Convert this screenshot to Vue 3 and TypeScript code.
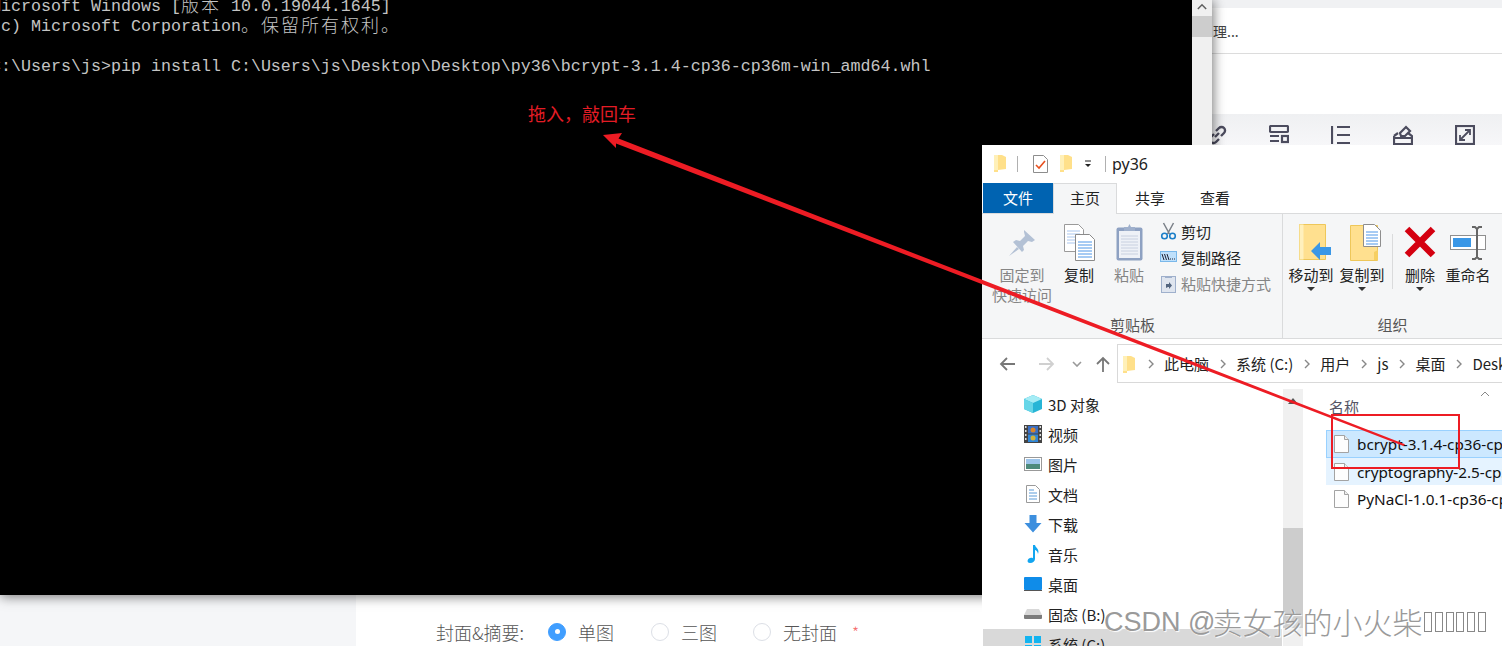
<script setup lang="ts">
const crumbs = ['此电脑', '系统 (C:)', '用户', 'js', '桌面', 'Desktop']
const files = [
  { name: 'bcrypt-3.1.4-cp36-cp36m-win_amd64.whl', cls: 'sel' },
  { name: 'cryptography-2.5-cp36-cp36m-win_amd64.whl', cls: 'sel2' },
  { name: 'PyNaCl-1.0.1-cp36-cp36m-win_amd64.whl', cls: '' },
]
const tofu = [1, 2, 3, 4, 5, 6]
</script>

<template>
  <div class="stage">
    <!-- page behind -->
    <div class="page">
      <div class="strip"></div>
      <div class="hrow"><span>理...</span></div>
      <div class="hblank"></div>
      <div class="tools">
        <svg class="ti" viewBox="0 0 20 20" fill="none" stroke="#4c4c5e" stroke-width="2.4"><path d="M12 8 8 12M7 9 4 12a3.5 3.5 0 0 0 5 5l3-3M9 6l3-3a3.5 3.5 0 0 1 5 5l-3 3"/></svg>
        <svg class="ti" viewBox="0 0 20 20" fill="none" stroke="#4c4c5e" stroke-width="2.2"><rect x="1" y="1" width="18" height="6" rx="1"/><path d="M1 11h9M1 16h9"/><rect x="13" y="11" width="6" height="6"/></svg>
        <svg class="ti" viewBox="0 0 20 20" fill="none" stroke="#4c4c5e" stroke-width="2.2"><path d="M1 1v18M6 2h13M6 10h13M6 18h13"/></svg>
        <svg class="ti" viewBox="0 0 20 20" fill="none" stroke="#4c4c5e" stroke-width="2.2"><path d="M1 11v8h18v-8l-4-3M1 11l4-3M1 13h18"/><path d="m7 8 6-6 4 4-5 5H8z"/></svg>
        <svg class="ti" viewBox="0 0 20 20" fill="none" stroke="#4c4c5e" stroke-width="2.2"><rect x="1" y="1" width="18" height="18"/><path d="m6 14 8-8M10 5h5v5M5 10v5h5" stroke-width="1.8"/></svg>
      </div>
      <div class="pgrow">
        <div class="pgpanel">
          <div class="form">
            <span class="flabel">封面&amp;摘要:</span>
            <span class="radio on"></span><span class="rtext">单图</span>
            <span class="radio r2"></span><span class="rtext">三图</span>
            <span class="radio r3"></span><span class="rtext">无封面</span>
            <span class="star">*</span>
          </div>
        </div>
      </div>
    </div>

    <!-- console -->
    <div class="console">
      <div class="term">
        <div class="tl">Microsoft Windows [<span class="zh">版本</span> 10.0.19044.1645]</div>
        <div class="tl">(c) Microsoft Corporation<span class="zh">。保留所有权利。</span></div>
        <div class="tl">&nbsp;</div>
        <div class="tl">C:\Users\js&gt;pip install C:\Users\js\Desktop\Desktop\py36\bcrypt-3.1.4-cp36-cp36m-win_amd64.whl</div>
      </div>
      <div class="cscroll">
        <svg class="cup" viewBox="0 0 12 8" width="10" height="7" fill="none" stroke="#606060" stroke-width="1.8"><path d="m1 7 5-5 5 5"/></svg>
        <div class="cthumb"></div>
      </div>
    </div>

    <!-- explorer -->
    <div class="explorer">
      <div class="title">
        <svg class="qf" viewBox="0 0 12 18" width="12" height="18"><path d="M0 1h8l4 2v12l-8 1v2H0z" fill="#ffe08a"/><path d="M0 1h4v15H0z" fill="#fff0b8"/></svg>
        <i class="tsep s1"></i>
        <svg class="qc" viewBox="0 0 15 18" width="15" height="18"><path d="M.5.5h10l4 4v13H.5z" fill="#fff" stroke="#8d8d8d"/><path d="m3 10 3 3 6-7" fill="none" stroke="#e8501f" stroke-width="1.6"/></svg>
        <svg class="qf2" viewBox="0 0 12 18" width="12" height="18"><path d="M0 1h8l4 2v12l-8 1v2H0z" fill="#ffe08a"/><path d="M0 1h4v15H0z" fill="#fff0b8"/></svg>
        <svg class="qd" viewBox="0 0 8 8" width="8" height="8"><path d="M1 1h6" stroke="#222" stroke-width="1"/><path d="M1 4h6L4 7z" fill="#222"/></svg>
        <i class="tsep s2"></i>
        <span class="wname">py36</span>
      </div>
      <div class="tabs">
        <span class="tab file">文件</span>
        <span class="tab home">主页</span>
        <span class="tab t3">共享</span>
        <span class="tab t4">查看</span>
      </div>
      <div class="ribbon">
        <div class="group g1">
          <div class="gbody">
            <div class="big pin dim">
              <div class="bi"><svg viewBox="0 0 28 28" width="28" height="28"><path d="M16 1 27 11l-3 2-4-1-5 5 1 4-2 2-9-10 3-2 4 1 5-5-1-4z" fill="#b3c1d5"/><path d="M1 27l8-9 2 2z" fill="#b3c1d5"/></svg></div>
              <span>固定到</span><span>快速访问</span>
            </div>
            <div class="big w50">
              <div class="bi"><svg viewBox="0 0 31 37" width="31" height="37"><path d="M.5.5h14l5 5v22H.5z" fill="#fff" stroke="#9a9a9a"/><path d="M3 7h13M3 10h13M3 13h13M3 16h13M3 19h13" stroke="#a9c6ee"/><path d="M11.500 10.500h14l5 5v21h-19z" fill="#fff" stroke="#8a8a8a"/><path d="M14 18h14M14 21h14M14 24h14M14 27h14M14 30h14M14 33h14" stroke="#4f97e8"/></svg></div>
              <span>复制</span>
            </div>
            <div class="big w50 dim">
              <div class="bi"><svg viewBox="0 0 27 37" width="27" height="37"><rect x=".5" y="3.500" width="26" height="33" rx="2" fill="#8ea1c2"/><rect x="3" y="7" width="21" height="27" fill="#eef1f7"/><path d="M5 12h17M5 15h17M5 18h17M5 21h17M5 24h17M5 27h17M5 30h17" stroke="#c8d0e0"/><path d="M8 7V3h4l1.500-3 1.500 3h4v4z" fill="#9fb0cc"/></svg></div>
              <span>粘贴</span>
            </div>
            <div class="smalls">
              <div class="small"><svg viewBox="0 0 16 18" width="16" height="18" fill="none"><path d="M3 1l6 11M13 1 7 12" stroke="#7a8088" stroke-width="1.500"/><circle cx="4" cy="14" r="2.800" stroke="#1d7fc8" stroke-width="1.600"/><circle cx="12" cy="14" r="2.800" stroke="#1d7fc8" stroke-width="1.600"/></svg><span>剪切</span></div>
              <div class="small"><svg viewBox="0 0 17 12" width="17" height="12"><rect x=".5" y=".5" width="16" height="10" fill="#bfe0fb" stroke="#7ab8ea"/><path d="m2 3 2 6M4.500 3l2 6M7 3l2 6" stroke="#223" stroke-width="1"/><path d="M10 8h1M12 8h1M14 8h1" stroke="#223"/></svg><span>复制路径</span></div>
              <div class="small dim"><svg viewBox="0 0 15 19" width="15" height="19"><rect x=".5" y="2.500" width="14" height="16" fill="#dfe5ef" stroke="#9fb0cc"/><path d="M4 2h7v2H4z" fill="#9fb0cc"/><path d="M5 14V10h3V8l3 3.500L8 15v-2H7z" fill="#53657f"/></svg><span>粘贴快捷方式</span></div>
            </div>
          </div>
          <div class="glabel">剪贴板</div>
        </div>
        <div class="group g2">
          <div class="gbody">
            <div class="big w50">
              <div class="bi sh"><svg viewBox="0 0 33 37" width="33" height="37"><path d="M.5.500h26v35H.5z" fill="#ffe08f" stroke="#eec75a"/><path d="M.500.500h4v35h-4z" fill="#fff0bd"/><path d="M12 27 21 18v5h11v8H21v5z" fill="#3a97e6"/></svg></div>
              <span>移动到</span><i class="drop"></i>
            </div>
            <div class="big w50 mr">
              <div class="bi sh"><svg viewBox="0 0 33 38" width="33" height="38"><path d="M.5 1.500h27v35H.5z" fill="#ffe08f" stroke="#eec75a"/><path d="M28 36V26l-4 2v8z" fill="#f6cf62"/><path d="M13.500.500h11l6 6v16h-17z" fill="#fff" stroke="#8e8e8e"/><path d="M16 8h12M16 11h12M16 14h12M16 17h12M16 20h12" stroke="#4f97e8"/></svg></div>
              <span>复制到</span><i class="drop"></i>
            </div>
            <div class="vsep"></div>
            <div class="big w46">
              <div class="bi lo"><svg viewBox="0 0 32 32" width="32" height="32"><path d="M3 3 29 29M29 3 3 29" stroke="#d40010" stroke-width="6.500"/></svg></div>
              <span>删除</span><i class="drop"></i>
            </div>
            <div class="big w50">
              <div class="bi lo"><svg viewBox="0 0 36 34" width="36" height="34"><rect x=".5" y="9.500" width="35" height="14" fill="#fff" stroke="#8f8f8f"/><rect x="3" y="12" width="18" height="9" fill="#3a97e6"/><path d="M22 1h3l2 2 2-2h3M27 3v28M22 33h3l2-2 2 2h3" fill="none" stroke="#666" stroke-width="2"/></svg></div>
              <span>重命名</span>
            </div>
          </div>
          <div class="glabel">组织</div>
        </div>
      </div>
      <div class="navbar">
        <svg class="nb nb1" viewBox="0 0 16 14" width="16" height="14" fill="none" stroke="#777" stroke-width="1.800"><path d="M16 7H2M8 1 2 7l6 6"/></svg>
        <svg class="nb nb2" viewBox="0 0 16 14" width="16" height="14" fill="none" stroke="#d0d0d0" stroke-width="1.800"><path d="M0 7h14M8 1l6 6-6 6"/></svg>
        <svg class="nb nb3" viewBox="0 0 10 6" width="10" height="6" fill="none" stroke="#999" stroke-width="1.600"><path d="m1 1 4 4 4-4"/></svg>
        <svg class="nb nb4" viewBox="0 0 14 16" width="14" height="16" fill="none" stroke="#777" stroke-width="1.800"><path d="M7 16V2M1 8l6-6 6 6"/></svg>
        <div class="addr">
          <svg class="af" viewBox="0 0 12 18" width="12" height="18"><path d="M0 1h8l4 2v12l-8 1v2H0z" fill="#ffe08a"/><path d="M0 1h4v15H0z" fill="#fff0b8"/></svg>
          <template v-for="c in crumbs" :key="c">
            <svg class="chev" viewBox="0 0 6 10" width="6" height="10" fill="none" stroke="#888" stroke-width="1.400"><path d="m1 1 4 4-4 4"/></svg>
            <span class="crumb">{{ c }}</span>
          </template>
        </div>
      </div>
      <div class="body">
        <div class="tree">
          <div class="row"><svg viewBox="0 0 18 18" width="18" height="18"><path d="M9 0 18 4v10l-9 4-9-4V4z" fill="#27b5d6"/><path d="M9 0 18 4 9 8 0 4z" fill="#a5ecf5"/><path d="M0 4 9 8v10L0 14z" fill="#66d6e8"/></svg><span>3D 对象</span></div>
          <div class="row"><svg viewBox="0 0 18 18" width="18" height="18"><rect width="18" height="18" fill="#444"/><path d="M1 1h1.500v2H1zM1 5h1.500v2H1zM1 9h1.500v2H1zM1 13h1.500v2H1zM15.500 1H17v2h-1.500zM15.500 5H17v2h-1.500zM15.500 9H17v2h-1.500zM15.500 13H17v2h-1.500z" fill="#ddd"/><rect x="4" y="1" width="10" height="7.500" fill="#3a6fc4"/><rect x="4" y="9.500" width="10" height="7.500" fill="#2f86d8"/><circle cx="9" cy="5" r="2.500" fill="#d8842b"/><circle cx="9" cy="13" r="2.500" fill="#d1b13a"/></svg><span>视频</span></div>
          <div class="row"><svg viewBox="0 0 18 14" width="18" height="14"><rect x=".5" y=".5" width="17" height="13" fill="#fff" stroke="#999"/><rect x="2" y="2" width="14" height="5" fill="#9cc4ea"/><rect x="2" y="7" width="14" height="5" fill="#4e8a7c"/></svg><span>图片</span></div>
          <div class="row"><svg viewBox="0 0 18 18" width="18" height="18"><path d="M2.500.5h9l4 4v13h-13z" fill="#fff" stroke="#9a9a9a"/><path d="M5 5h5M5 8h8M5 11h8M5 14h8" stroke="#5b9bd8"/></svg><span>文档</span></div>
          <div class="row"><svg viewBox="0 0 18 18" width="18" height="18"><path d="M5.500 0h7v8H17.500L9 17.500.5 8h5z" fill="#3d8fde"/></svg><span>下载</span></div>
          <div class="row"><svg viewBox="0 0 18 18" width="18" height="18"><path d="M9 0h2c.5 3 5 4 3 9-.5-3-2-4-3-4v9c0 2-2 4-5 4s-3-3-1-4.500c1-.8 3-.8 4-.2z" fill="#12a5f0"/></svg><span>音乐</span></div>
          <div class="row"><svg viewBox="0 0 18 14" width="18" height="14"><rect width="18" height="13" rx="1" fill="#0f8ce9"/><rect y="13" width="18" height="1" fill="#555"/></svg><span>桌面</span></div>
          <div class="row"><svg viewBox="0 0 18 12" width="18" height="12"><path d="M3 1h12l3 6H0z" fill="#d8d8d8"/><path d="M0 7h18v3a1 1 0 0 1-1 1H1a1 1 0 0 1-1-1z" fill="#7c7c7c"/></svg><span>固态 (B:)</span></div>
          <div class="row cur"><svg viewBox="0 0 18 18" width="18" height="18"><path d="M1 1h7v7H1zM10 1h7v7h-7zM1 10h7v7H1zM10 10h7v7h-7z" fill="#14b4f0"/></svg><span>系统 (C:)</span></div>
        </div>
        <div class="tscroll">
          <svg class="tup" viewBox="0 0 10 6" width="10" height="6"><path d="m5 0 5 6H0z" fill="#555"/></svg>
          <div class="tthumb"></div>
        </div>
        <div class="list">
          <svg class="sort" viewBox="0 0 10 6" width="10" height="6" fill="none" stroke="#888"><path d="m1 5 4-4 4 4"/></svg>
          <div class="lhead">名称</div>
          <div v-for="f in files" :key="f.name" class="frow" :class="f.cls">
            <svg viewBox="0 0 15 18" width="15" height="18"><path d="M.5.5h10l4 4v13H.5z" fill="#fdfdfd" stroke="#a3a3a3"/><path d="M10.500.5v4h4" fill="#eee" stroke="#a3a3a3"/></svg>
            <span>{{ f.name }}</span>
          </div>
        </div>
      </div>
    </div>

    <!-- annotations -->
    <div class="note">拖入，敲回车</div>
    <svg class="ink" viewBox="0 0 1502 646" width="1502" height="646">
      <path d="M603 135 622 133 618.500 138.500 1405 444.300 1403.500 446 616 143.500 616 148z" fill="#ed1c24"/>
      <rect x="1332" y="415" width="127" height="53" fill="none" stroke="#ed1c24" stroke-width="2"/>
    </svg>
    <div class="mark">CSDN @<span class="mz">卖女孩的小火柴</span><i v-for="t in tofu" :key="t" class="tofu"></i></div>
  </div>
</template>

<style>
html, body { margin: 0; background: #fff; }
</style>

<style scoped>
.stage { position: relative; width: 1502px; height: 646px; overflow: hidden; background: #fff; font-family: "Noto Sans CJK SC", "Noto Sans", sans-serif; color: #222; }
.page { position: absolute; inset: 0; display: flex; flex-direction: column; }
.strip { height: 8px; background: #f0f1f3; }
.hrow { border-bottom: 1px solid #dcdcdc; padding-left: 1213px; display: flex; align-items: center; font-size: 14px; color: #444; box-sizing: border-box; height: 46px; }
.hblank { height: 60px; }
.tools { height: 32px; background: linear-gradient(#eff0f2, #f7f7f9); display: flex; gap: 42px; padding: 11px 0 0 1207px; box-sizing: border-box; overflow: hidden; }
.ti { width: 20px; height: 20px; flex: none; }
.pgrow { flex: 1; background: #f5f6f8; padding-left: 356px; display: flex; }
.pgpanel { flex: 1; background: #fff; display: flex; align-items: flex-end; padding-left: 80px; padding-bottom: 1px; }
.form { display: flex; align-items: center; height: 26px; font-size: 18px; font-weight: 300; color: #555; }
.flabel { width: 112px; }
.radio { width: 18px; height: 18px; border: 1px solid #dcdfe6; border-radius: 50%; box-sizing: border-box; flex: none; margin-top: -1px; }
.radio.on { background: #409eff; border-color: #409eff; position: relative; }
.radio.on::after { content: ""; position: absolute; left: 5.5px; top: 5.5px; width: 5px; height: 5px; background: #fff; border-radius: 50%; }
.r2 { margin-left: 37px; }
.r3 { margin-left: 36px; }
.rtext { margin-left: 12px; }
.star { color: #f56c6c; margin-left: 15px; font-size: 16px; }

.console { position: absolute; left: 0; top: 0; width: 1212px; height: 595px; background: #000; display: flex; box-shadow: 0 2px 12px rgba(0,0,0,.35), 2px 0 10px rgba(0,0,0,.25); }
.term { flex: 1; min-width: 0; overflow: hidden; margin-left: -9px; margin-top: -3px; font-family: "Liberation Mono", monospace; font-size: 16.667px; line-height: 20px; color: #c4c4c4; white-space: pre; }
.tl { height: 20px; }
.zh { font-family: "Noto Sans CJK SC", sans-serif; font-size: 18px; letter-spacing: 2px; font-weight: 300; line-height: 0; position: relative; top: 1px; }
.cscroll { width: 20px; background: #f0f0f0; position: relative; flex: none; }
.cup { display: block; margin: 3px auto 0; }
.cthumb { height: 21px; background: #cdcdcd; margin-top: 6px; }

.explorer { position: absolute; left: 982px; top: 145px; width: 520px; height: 501px; background: #fff; display: flex; flex-direction: column; overflow: hidden; }
.title { height: 38px; flex: none; display: flex; align-items: center; padding-left: 12px; }
.qf { margin-top: -2px; }
.tsep { width: 1px; height: 16px; background: #b0b0b0; flex: none; }
.s1 { margin-left: 11px; }
.qc { margin-left: 15px; }
.qf2 { margin-left: 12px; margin-top: -2px; }
.qd { margin-left: 12px; }
.s2 { margin-left: 13px; }
.wname { margin-left: 6px; font-family: "Noto Sans", sans-serif; font-size: 16px; line-height: 20px; color: #222; }
.tabs { height: 31px; flex: none; display: flex; padding-left: 1px; border-bottom: 1px solid #dadbdc; box-sizing: border-box; }
.tab { display: flex; align-items: center; justify-content: center; font-size: 15px; height: 31px; box-sizing: border-box; padding-bottom: 3px; }
.file { width: 70px; background: #0063b1; color: #fff; height: 30px; padding-bottom: 2px; }
.home { width: 64px; background: #f5f6f7; border: 1px solid #dadbdc; border-bottom: none; }
.t3 { width: 66px; }
.t4 { width: 64px; }
.ribbon { height: 125px; flex: none; background: #f5f6f7; border-bottom: 1px solid #dadbdc; box-sizing: border-box; display: flex; padding-left: 1px; }
.group { display: flex; flex-direction: column; box-sizing: border-box; position: relative; }
.g1 { width: 300px; border-right: 1px solid #dadbdc; }
.g2 { width: 219px; }
.gbody { flex: 1; display: flex; padding-top: 8px; align-items: flex-start; }
.g1 .gbody { padding-left: 9px; }
.g2 .gbody { padding-left: 3px; }
.glabel { height: 20px; padding-bottom: 3px; font-size: 15px; line-height: 20px; text-align: center; color: #555; }
.big { display: flex; flex-direction: column; align-items: center; font-size: 15px; line-height: 20px; white-space: nowrap; color: #222; flex: none; }
.pin { width: 60px; margin-right: 2px; }
.w50 { width: 50px; }
.w46 { width: 46px; }
.mr { margin-left: 1px; }
.bi { height: 43px; display: flex; align-items: flex-start; justify-content: center; width: 100%; padding-top: 2px; box-sizing: border-box; }
.pin .bi { padding-top: 7px; }
.bi.sh { padding-left: 8px; }
.bi.lo { padding-top: 4px; }
.dim { color: #858585; }
.drop { width: 0; height: 0; border: 4px solid transparent; border-top: 4px solid #333; border-bottom: 0; margin-top: 2px; }
.vsep { width: 1px; height: 55px; background: #dadbdc; margin: 12px 4px 0 5px; flex: none; }
.smalls { margin-left: 6px; margin-top: -4px; display: flex; flex-direction: column; }
.small { height: 26px; display: flex; align-items: center; gap: 4px; font-size: 15px; white-space: nowrap; color: #222; }
.small.dim { color: #858585; }
.small svg { width: 17px; flex: none; }
.navbar { height: 49px; flex: none; display: flex; align-items: center; position: relative; }
.nb { flex: none; }
.nb1 { margin-left: 17px; }
.nb2 { margin-left: 24px; }
.nb3 { margin-left: 17px; }
.nb4 { margin-left: 14px; }
.addr { margin-left: 7px; flex: 1; min-width: 0; height: 39px; border: 1px solid #d9d9d9; border-right: none; box-sizing: border-box; display: flex; align-items: center; padding-left: 5px; overflow: hidden; white-space: nowrap; font-size: 15px; }
.chev { margin: 0 10px 0 11px; flex: none; }
.af { flex: none; margin-right: 2px; }
.crumb { flex: none; color: #222; }
.body { flex: 1; min-height: 0; display: flex; margin-top: 1px; }
.tree { width: 300px; flex: none; padding-left: 1px; box-sizing: border-box; }
.row { height: 30px; padding-left: 41px; display: flex; align-items: center; gap: 6px; font-size: 15px; white-space: nowrap; color: #222; }
.row svg { flex: none; }
.row.cur { background: #d9d9d9; }
.tscroll { width: 20px; flex: none; background: #f0f0f0; position: relative; display: flex; flex-direction: column; margin-left: 1px; }
.tup { margin: 9px auto 0; }
.tthumb { height: 100px; background: #cdcdcd; margin-top: 124px; }
.list { flex: 1; min-width: 0; padding-left: 23px; position: relative; font-family: "Noto Sans", "Noto Sans CJK SC", sans-serif; white-space: nowrap; overflow: hidden; }
.sort { position: absolute; left: 177px; top: 2px; }
.lhead { height: 41px; padding: 8px 0 0 3px; box-sizing: border-box; font-size: 15px; line-height: 20px; color: #556; }
.frow { height: 27px; display: flex; align-items: center; gap: 8px; padding-left: 7px; font-size: 15.3px; color: #111; box-sizing: border-box; border: 1px solid transparent; border-right: none; }
.frow svg { flex: none; }
.frow.sel { background: #cce8ff; border-color: #99d1ff; height: 28px; }
.frow.sel2 { background: #e5f3ff; }
.note { position: absolute; left: 528px; top: 100px; font-size: 18px; line-height: 26px; color: #e31c25; }
.ink { position: absolute; left: 0; top: 0; pointer-events: none; }
.mark { position: absolute; left: 1104px; top: 602px; font-family: "Liberation Sans", "Noto Sans CJK SC", sans-serif; font-size: 27px; line-height: 40px; color: #9a9a9a; text-shadow: 1px 1px 1px #fff, -1px 0 0 rgba(255,255,255,.4); white-space: nowrap; display: flex; align-items: center; }
.mz { font-family: "Noto Sans CJK SC", sans-serif; font-size: 30px; font-weight: 300; margin: -2px 2px 0 -3px; }
.tofu { width: 8px; height: 20px; border: 1px solid #888; box-sizing: border-box; margin-right: 2.7px; flex: none; }
</style>
